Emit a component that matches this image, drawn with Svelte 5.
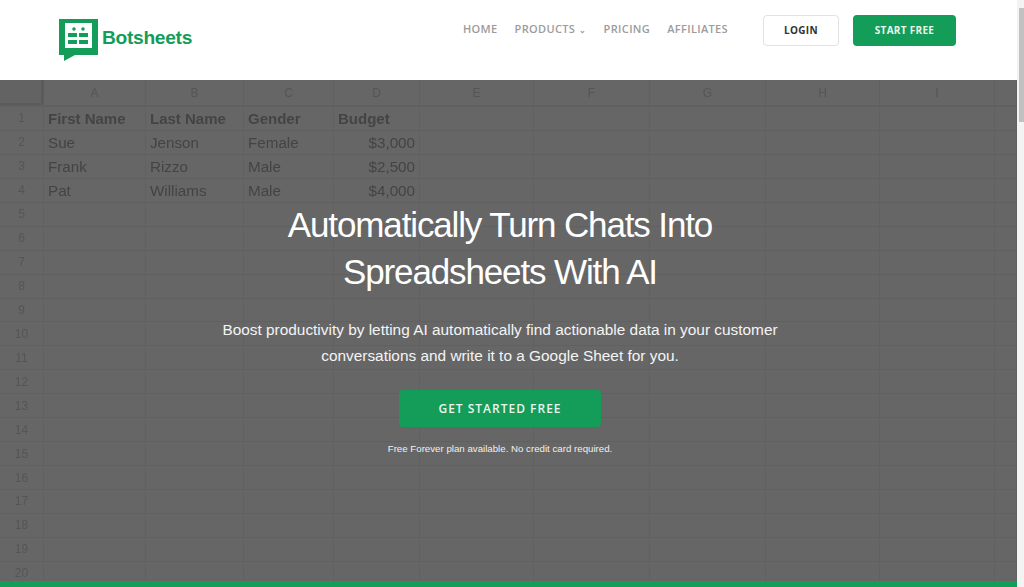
<script lang="ts">
	const columns = [
		{ name: 'A', width: 102 },
		{ name: 'B', width: 98 },
		{ name: 'C', width: 90 },
		{ name: 'D', width: 86 },
		{ name: 'E', width: 114 },
		{ name: 'F', width: 116 },
		{ name: 'G', width: 116 },
		{ name: 'H', width: 114 },
		{ name: 'I', width: 115 }
	];
	const data = [
		['First Name', 'Last Name', 'Gender', 'Budget'],
		['Sue', 'Jenson', 'Female', '$3,000'],
		['Frank', 'Rizzo', 'Male', '$2,500'],
		['Pat', 'Williams', 'Male', '$4,000']
	];
	const rows = Array.from({ length: 20 }, (_, i) => i + 1);
	const template = `44px ${columns.map((c) => c.width + 'px').join(' ')} 1fr`;
	const navLinks = ['HOME', 'PRODUCTS', 'PRICING', 'AFFILIATES'];
</script>

<div class="window">
	<div class="page">
		<header class="topbar">
			<a class="logo" href="#top">
				<svg width="40" height="43" viewBox="0 0 40 43" aria-hidden="true">
					<path d="M0 0H39V36H16L5 42V36H0Z" fill="#149c59" />
					<rect x="6" y="4" width="27" height="25" fill="#fff" />
					<circle cx="15" cy="10" r="1.8" fill="#149c59" />
					<circle cx="24" cy="10" r="1.8" fill="#149c59" />
					<rect x="9" y="14" width="9" height="4" fill="#149c59" />
					<rect x="20" y="14" width="9" height="4" fill="#149c59" />
					<rect x="9" y="21" width="9" height="4" fill="#149c59" />
					<rect x="20" y="21" width="9" height="4" fill="#149c59" />
				</svg>
				<span>Botsheets</span>
			</a>
			<nav class="nav">
				{#each navLinks as link}
					<a href="#top">{link}{#if link === 'PRODUCTS'}<small>⌄</small>{/if}</a>
				{/each}
			</nav>
			<a class="btn login" href="#top">LOGIN</a>
			<a class="btn start" href="#top">START FREE</a>
		</header>

		<main class="hero">
			<div class="sheet">
				<div class="row head" style="grid-template-columns: {template}">
					<div class="cell corner"></div>
					{#each columns as col}
						<div class="cell label">{col.name}</div>
					{/each}
					<div class="cell"></div>
				</div>
				{#each rows as n}
					<div class="row" style="grid-template-columns: {template}">
						<div class="cell num">{n}</div>
						{#each columns as col, c}
							<div class="cell" class:bold={n === 1} class:money={c === 3 && n > 1}>
								{data[n - 1]?.[c] ?? ''}
							</div>
						{/each}
						<div class="cell"></div>
					</div>
				{/each}
			</div>

			<div class="overlay">
				<h1>Automatically Turn Chats Into<br />Spreadsheets With AI</h1>
				<p>
					Boost productivity by letting AI automatically find actionable data in your customer<br />
					conversations and write it to a Google Sheet for you.
				</p>
				<a class="cta" href="#top">GET STARTED FREE</a>
				<span class="note">Free Forever plan available. No credit card required.</span>
			</div>
		</main>

		<div class="strip"></div>
	</div>

	<div class="scrollbar"><div class="thumb"></div></div>
</div>

<style>
	:global(body) {
		margin: 0;
		overflow: hidden;
		background: #fff;
	}

	a {
		text-decoration: none;
	}

	.window {
		display: flex;
		height: 587px;
	}

	.page {
		flex: 1;
		min-width: 0;
	}

	.scrollbar {
		width: 7px;
		padding: 8px 0 0 2px;
		box-sizing: border-box;
		background: #f3f3f3;
	}

	.thumb {
		height: 114px;
		background: #c1c1c1;
	}

	.topbar {
		display: flex;
		align-items: flex-start;
		height: 80px;
		padding: 15px 61px 0 59px;
		box-sizing: border-box;
		background: #fff;
		font-family: 'Open Sans', sans-serif;
	}

	.logo {
		display: flex;
		align-items: center;
		gap: 3px;
		margin-top: 4px;
		height: 43px;
		color: #149c59;
		font-family: 'Liberation Sans', sans-serif;
		font-size: 19.2px;
		font-weight: 700;
		letter-spacing: -0.3px;
	}

	.logo span {
		margin-top: -6px;
	}

	.nav {
		display: flex;
		gap: 17px;
		margin-left: auto;
		margin-right: 35px;
		padding-top: 6px;
		font-size: 11px;
		font-weight: 600;
		letter-spacing: 0.35px;
	}

	.nav a {
		color: #9c9c9c;
	}

	.nav small {
		margin-left: 4px;
		font-size: 8px;
	}

	.btn {
		display: flex;
		align-items: center;
		justify-content: center;
		height: 31px;
		padding-bottom: 2px;
		box-sizing: border-box;
		border-radius: 4px;
		font-size: 10px;
		font-weight: 700;
		letter-spacing: 0.3px;
	}

	.login {
		width: 76px;
		margin-right: 14px;
		border: 1px solid #e2e2e2;
		color: #333;
	}

	.start {
		width: 103px;
		background: #149c59;
		color: #e8f6ee;
	}

	.hero {
		position: relative;
		height: 501px;
		overflow: hidden;
		background: #666;
	}

	.sheet {
		font-family: 'Liberation Sans', sans-serif;
		color: #444;
		filter: blur(0.5px);
	}

	.row {
		display: grid;
		height: 23.95px;
		box-sizing: border-box;
		border-bottom: 1px solid #606060;
	}

	.row.head {
		height: 27px;
		border-bottom: 2px solid #606060;
	}

	.cell {
		display: flex;
		align-items: center;
		padding: 0 4px;
		overflow: hidden;
		border-right: 1px solid #616161;
		font-size: 15.2px;
		white-space: nowrap;
	}

	.corner {
		background: #636363;
		border-right: 3px solid #5b5b5b;
		border-bottom: 2px solid #5b5b5b;
	}

	.label,
	.num {
		justify-content: center;
		color: #555;
		font-size: 12px;
	}

	.bold {
		font-weight: 700;
		font-size: 15px;
	}

	.money {
		justify-content: flex-end;
	}

	.overlay {
		position: absolute;
		inset: 0 17px 0 0;
		display: flex;
		flex-direction: column;
		align-items: center;
		font-family: 'Liberation Sans', sans-serif;
		color: #fff;
		text-align: center;
	}

	h1 {
		margin: 121px 0 0;
		font-size: 35px;
		font-weight: 400;
		line-height: 47px;
		letter-spacing: -1.13px;
	}

	p {
		margin: 22px 0 0;
		font-size: 15.4px;
		line-height: 26px;
		color: #f4f4f4;
	}

	.cta {
		display: flex;
		align-items: center;
		justify-content: center;
		width: 202px;
		height: 37px;
		margin-top: 21px;
		padding-bottom: 1px;
		box-sizing: border-box;
		border-radius: 4px;
		background: #149c59;
		color: #e8f6ee;
		font-family: 'Open Sans', sans-serif;
		font-size: 12px;
		font-weight: 600;
		letter-spacing: 1px;
	}

	.note {
		margin-top: 16px;
		font-size: 9.7px;
		color: #f0f0f0;
	}

	.strip {
		height: 6px;
		background: #149c59;
	}
</style>
